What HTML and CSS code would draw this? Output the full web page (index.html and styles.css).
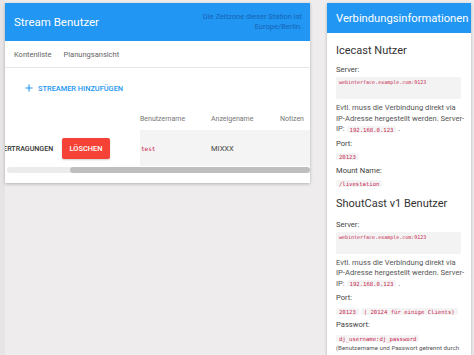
FILE: index.html
```html
<!DOCTYPE html>
<html lang="de">
<head>
<meta charset="utf-8">
<title>Stream Benutzer</title>
<link rel="stylesheet" href="styles.css">
</head>
<body>
<div class="page">
  <section class="card users">
    <header class="card-head users-head">
      <h2 class="card-title">Stream Benutzer</h2>
      <p class="tz">Die Zeitzone dieser Station ist<br>Europe/Berlin.</p>
    </header>
    <nav class="tabs">
      <a class="tab">Kontenliste</a>
      <a class="tab">Planungsansicht</a>
    </nav>
    <div class="actions">
      <button class="btn-flat"><svg class="plus" viewBox="0 0 10 10" width="8" height="8"><path d="M5 0.5v9M0.5 5h9" stroke="#2196f3" stroke-width="1.4" fill="none"/></svg>STREAMER HINZUFÜGEN</button>
    </div>
    <div class="table-wrap">
      <div class="table-clip">
        <table class="grid">
          <colgroup>
            <col class="c-actions"><col class="c-user"><col class="c-name"><col class="c-notes">
          </colgroup>
          <thead>
            <tr><th></th><th>Benutzername</th><th>Anzeigename</th><th>Notizen</th></tr>
          </thead>
          <tbody>
            <tr>
              <td class="cell-actions"><span class="btn-text">ÜBERTRAGUNGEN</span><span class="btn-red">LÖSCHEN</span></td>
              <td><code class="plain-code">test</code></td>
              <td>MIXXX</td>
              <td></td>
            </tr>
          </tbody>
        </table>
      </div>
      <div class="scrollbar"><div class="thumb"></div></div>
    </div>
  </section>

  <aside class="card info">
    <header class="card-head info-head">
      <h2 class="card-title small">Verbindungsinformationen</h2>
    </header>
    <div class="info-body">
      <h3 class="sub">Icecast Nutzer</h3>
      <p class="label">Server:</p>
      <pre class="block-code">webinterface.example.com:9123</pre>
      <p class="text">Evtl. muss die Verbindung direkt via IP-Adresse hergestellt werden. Server-IP: <code>192.168.0.123</code> .</p>
      <p class="label">Port:</p>
      <p class="val"><code>20123</code></p>
      <p class="label">Mount Name:</p>
      <p class="val"><code>/livestation</code></p>

      <h3 class="sub sub2">ShoutCast v1 Benutzer</h3>
      <p class="label">Server:</p>
      <pre class="block-code">webinterface.example.com:9123</pre>
      <p class="text">Evtl. muss die Verbindung direkt via IP-Adresse hergestellt werden. Server-IP: <code>192.168.0.123</code> .</p>
      <p class="label">Port:</p>
      <p class="val"><code>20123</code> <code>( 20124 für einige Clients)</code></p>
      <p class="label">Passwort:</p>
      <p class="val"><code>dj_username:dj_password</code></p>
      <p class="note">(Benutzername und Passwort getrennt durch</p>
    </div>
  </aside>
</div>
</body>
</html>
```

FILE: styles.css
```css
* { box-sizing: border-box; }
html, body { margin: 0; padding: 0; }
body {
  font-family: Roboto, "Noto Sans", "Liberation Sans", sans-serif;
  background: linear-gradient(to right, #e6e4e4 0, #e6e4e4 5px, #eeecec 5px);
  color: #555;
  width: 474px;
  height: 355px;
  overflow: hidden;
}
.page {
  display: flex;
  align-items: flex-start;
  gap: 17px;
  padding: 3px 0 0 5px;
}
.card {
  background: #fff;
  box-shadow: 0 1px 3px rgba(0,0,0,0.25);
}
.users { width: 305px; flex: none; }
.info { width: 144px; flex: none; }
.card-head {
  background: #2196f3;
  display: flex;
  align-items: center;
  justify-content: space-between;
  padding: 0 8px 0 9px;
}
.users-head { height: 38px; }
.info-head { height: 30px; }
.card-title {
  margin: 0;
  color: #fff;
  font-size: 11.5px;
  font-weight: 400;
}
.card-title.small { font-size: 11.2px; white-space: nowrap; }
.tz {
  margin: 0;
  text-align: right;
  font-size: 7.5px;
  line-height: 10.5px;
  color: #1763b5;
}
.tabs {
  display: flex;
  gap: 12px;
  height: 27px;
  align-items: center;
  padding: 0 9px;
  border-bottom: 1px solid #e6e6e6;
}
.tab {
  font-size: 7.5px;
  color: #666;
}
.actions {
  height: 40px;
  display: flex;
  align-items: center;
  padding-left: 20px;
}
.btn-flat {
  border: 0;
  background: none;
  padding: 0;
  font-family: inherit;
  font-size: 7.4px;
  font-weight: 500;
  color: #2196f3;
  display: flex;
  align-items: center;
  gap: 5px;
}
.table-wrap { padding-bottom: 10px; }
.table-clip { overflow: hidden; }
.grid {
  border-collapse: collapse;
  table-layout: fixed;
  width: 385px;
  margin-left: -11px;
}
.c-actions { width: 146px; }
.c-user { width: 71px; }
.c-name { width: 69px; }
.c-notes { width: 99px; }
.grid th {
  font-size: 7px;
  font-weight: 400;
  color: #777;
  text-align: left;
  height: 22px;
  padding: 0;
}
.grid td {
  height: 36px;
  padding: 0;
  background: #f4f4f4;
  font-size: 7.5px;
  color: #444;
}
.grid td.cell-actions { background: #fff; }
.cell-actions { white-space: nowrap; }
.btn-text {
  display: inline-block;
  font-weight: 500;
  font-size: 7.1px;
  color: #333;
  vertical-align: middle;
  width: 68px;
}
.btn-red {
  display: inline-flex;
  align-items: center;
  justify-content: center;
  width: 48px;
  height: 21px;
  background: #f44336;
  color: #fff;
  font-size: 7.4px;
  font-weight: 500;
  border-radius: 2px;
  box-shadow: 0 1px 2px rgba(0,0,0,0.2);
  vertical-align: middle;
}
.plain-code {
  font-family: "DejaVu Sans Mono", "Liberation Mono", monospace;
  font-size: 6px;
  color: #c7254e;
  background: none;
  padding: 0 0 0 1px;
}
.scrollbar {
  margin: 1px 0 0 2px;
  height: 6px;
  background: #ebebeb;
  border-radius: 3px;
  display: flex;
  justify-content: flex-end;
}
.thumb {
  width: 240px;
  height: 6px;
  background: #bfbfbf;
  border-radius: 3px;
}
.info-body {
  padding: 10px 6px 30px 9px;
}
.sub {
  margin: 0;
  font-size: 11px;
  font-weight: 400;
  line-height: 16px;
  color: #333;
}
.sub2 { margin-top: 6px; }
.label {
  margin: 5px 0 0;
  font-size: 7.6px;
  line-height: 11px;
  color: #444;
}
.sub2 + .label { margin-top: 7px; }
.block-code {
  margin: 2px 4px 0 0;
  background: #f3f3f3;
  font-family: "DejaVu Sans Mono", "Liberation Mono", monospace;
  font-size: 5px;
  line-height: 7px;
  color: #c7254e;
  padding: 2px 3px 13px;
  border-radius: 2px;
}
.text {
  margin: 4px 0 0;
  font-size: 7.6px;
  line-height: 10.5px;
  color: #555;
}
.val {
  margin: 2px 0 0;
  font-size: 7.6px;
  line-height: 11px;
}
code {
  font-family: "DejaVu Sans Mono", "Liberation Mono", monospace;
  font-size: 5.6px;
  color: #c7254e;
  background: #f4f4f4;
  padding: 0.5px 3px;
  border-radius: 2px;
}
.label + .val { margin-top: 2px; }
.val + .label { margin-top: 2px; }
.text + .label { margin-top: 3px; }
.note {
  margin: 0;
  font-size: 6.2px;
  color: #555;
  white-space: nowrap;
}
```
